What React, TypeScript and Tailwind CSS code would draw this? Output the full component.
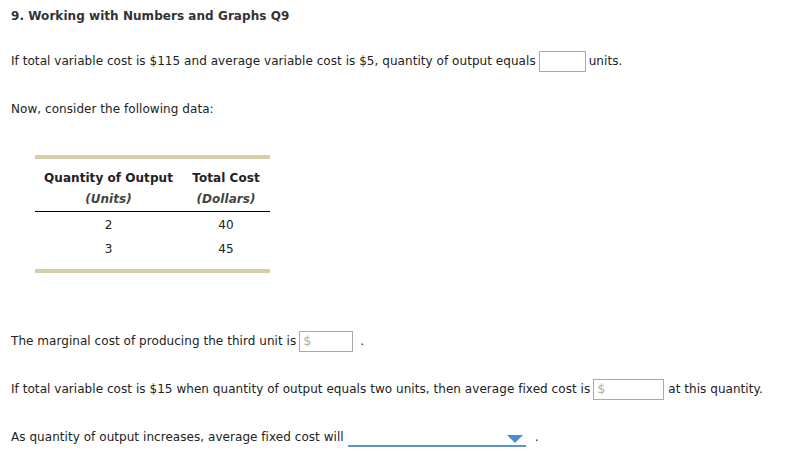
import React from "react";

const font = { fontFamily: '"DejaVu Sans", Verdana, sans-serif' };

function Box({ w, dollar }: { w: string; dollar?: boolean }) {
  return (
    <span
      className={`inline-flex items-center h-[21px] border border-[#a9a9a9] bg-white align-middle mx-[3px] ${w}`}
    >
      {dollar ? <span className="pl-[3px] text-[#b0b0b0] text-[13px]">$</span> : null}
    </span>
  );
}

export default function App() {
  return (
    <div
      className="w-[798px] h-[454px] bg-white text-[#222] text-[12px] tracking-[0.05px] pl-[11px] pt-[7px]"
      style={font}
    >
      <div className="font-bold text-[#333] h-[18px] leading-[18px]">9. Working with Numbers and Graphs Q9</div>

      <div className="mt-[24px] h-[24px] flex items-center">
        <span>If total variable cost is $115 and average variable cost is $5, quantity of output equals</span>
        <Box w="w-[47px]" />
        <span>units.</span>
      </div>

      <div className="mt-[27px] h-[18px] leading-[18px]">Now, consider the following data:</div>

      <div className="ml-[24px] mt-[37px] w-[235px]">
        <div className="h-[4px] bg-[#d6cfa6]" />
        <div className="grid grid-cols-[147px_88px] text-center">
          <div className="font-bold pt-[8px] h-[30px] leading-[22px]">Quantity of Output</div>
          <div className="font-bold pt-[8px] h-[30px] leading-[22px]">Total Cost</div>
          <div className="italic font-bold text-[#444] h-[20px] leading-[20px]">(Units)</div>
          <div className="italic font-bold text-[#444] h-[20px] leading-[20px]">(Dollars)</div>
        </div>
        <div className="h-[1px] bg-black mt-[2px]" />
        <div className="grid grid-cols-[147px_88px] text-center">
          <div className="h-[25px] leading-[25px] pt-[1px]">2</div>
          <div className="h-[25px] leading-[25px] pt-[1px]">40</div>
          <div className="h-[25px] leading-[25px]">3</div>
          <div className="h-[25px] leading-[25px]">45</div>
        </div>
        <div className="h-[4px] bg-[#d6cfa6] mt-[7px]" />
      </div>

      <div className="mt-[56px] h-[24px] flex items-center">
        <span>The marginal cost of producing the third unit is</span>
        <Box w="w-[54px]" dollar />
        <span className="ml-[4px]">.</span>
      </div>

      <div className="mt-[24px] h-[24px] flex items-center">
        <span>If total variable cost is $15 when quantity of output equals two units, then average fixed cost is</span>
        <Box w="w-[71px]" dollar />
        <span className="ml-[1px]">at this quantity.</span>
      </div>

      <div className="mt-[24px] h-[24px] flex items-center">
        <span>As quantity of output increases, average fixed cost will</span>
        <span className="relative inline-block w-[178px] h-[20px] ml-[4px] border-b-2 border-[#5b95c9]">
          <svg className="absolute right-[3px] top-[8px]" width="16" height="9" viewBox="0 0 16 9">
            <polygon points="0,0 16,0 8,8" fill="#4a8dcc" />
          </svg>
        </span>
        <span className="ml-[9px]">.</span>
      </div>
    </div>
  );
}
